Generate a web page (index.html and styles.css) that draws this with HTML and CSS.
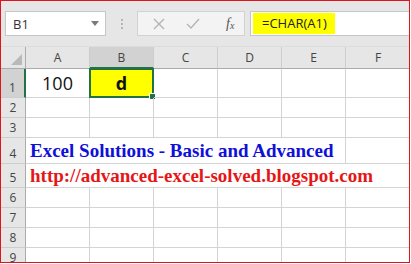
FILE: index.html
```html
<!DOCTYPE html>
<html lang="en">
<head>
    <meta charset="UTF-8">
    <title>Excel CHAR</title>
    <link rel="stylesheet" href="styles.css">
</head>
<body>
    <div class="frame">
        <!-- 1. formula bar -->
        <div class="bar">
            <div class="namebox">
                <span>B1</span>
                <svg class="drop" width="8" height="5" viewBox="0 0 8 5"><path d="M0 0h8L4 5z" fill="#7a7a7a"/></svg>
            </div>
            <div class="grip"><i></i><i></i><i></i></div>
            <div class="btns">
                <svg width="12" height="12" viewBox="0 0 12 12"><path d="M1 1l10 10M11 1L1 11" stroke="#b4b4b4" stroke-width="1.4"/></svg>
                <svg width="14" height="12" viewBox="0 0 14 12"><path d="M1 6l4 4 8-9" stroke="#b4b4b4" stroke-width="1.4" fill="none"/></svg>
                <span class="fx">f<sub>x</sub></span>
            </div>
            <div class="formula">
                <span class="hl">=CHAR(A1)</span>
            </div>
        </div>

        <!-- 2. sheet -->
        <div class="sheet">
            <div class="corner"><svg width="11" height="11" viewBox="0 0 11 11"><path d="M11 0v11H0z" fill="#b9b9b9"/></svg></div>
            <div class="ch">A</div>
            <div class="ch sel">B</div>
            <div class="ch">C</div>
            <div class="ch">D</div>
            <div class="ch">E</div>
            <div class="ch last">F</div>

            <div class="rh sel">1</div>
            <div class="c num">100</div>
            <div class="c active">d<i class="handle"></i></div>
            <div class="c"></div><div class="c"></div><div class="c"></div><div class="c last"></div>

            <div class="rh">2</div>
            <div class="c"></div><div class="c"></div><div class="c"></div><div class="c"></div><div class="c"></div><div class="c last"></div>

            <div class="rh">3</div>
            <div class="c"></div><div class="c"></div><div class="c"></div><div class="c"></div><div class="c"></div><div class="c last"></div>

            <div class="rh">4</div>
            <div class="c span5 blue">Excel Solutions - Basic and Advanced</div>
            <div class="c last"></div>

            <div class="rh">5</div>
            <div class="c span6 red last">http://advanced-excel-solved.blogspot.com</div>

            <div class="rh">6</div>
            <div class="c"></div><div class="c"></div><div class="c"></div><div class="c"></div><div class="c"></div><div class="c last"></div>
            <div class="rh">7</div>
            <div class="c"></div><div class="c"></div><div class="c"></div><div class="c"></div><div class="c"></div><div class="c last"></div>
            <div class="rh">8</div>
            <div class="c"></div><div class="c"></div><div class="c"></div><div class="c"></div><div class="c"></div><div class="c last"></div>
            <div class="rh">9</div>
            <div class="c"></div><div class="c"></div><div class="c"></div><div class="c"></div><div class="c"></div><div class="c last"></div>
        </div>
    </div>
</body>
</html>
```

FILE: styles.css
```css
html,
body {
    margin: 0;
    padding: 0;
    background: #fff;
}

.frame {
    width: 410px;
    height: 263px;
    box-sizing: border-box;
    border: 1px solid #e0141b;
    overflow: hidden;
    font-family: "Open Sans", "Liberation Sans", sans-serif;
}

/* 1. formula bar */
.bar {
    display: flex;
    align-items: center;
    height: 46px;
    padding: 0 0 0 4px;
    box-sizing: border-box;
    background: #e6e6e6;
    border-bottom: 1px solid #dcdcdc;
}

.namebox {
    display: flex;
    align-items: center;
    justify-content: space-between;
    width: 101px;
    height: 25px;
    box-sizing: border-box;
    padding: 0 6px 0 7px;
    background: #fff;
    border: 1px solid #c6c6c6;
    font-size: 13px;
    color: #333;
}

.grip {
    display: flex;
    flex-direction: column;
    gap: 2px;
    margin: 0 14px 0 15px;
}

.grip i {
    width: 2px;
    height: 2px;
    background: #b5b5b5;
}

.btns {
    display: flex;
    align-items: center;
    width: 108px;
    height: 25px;
    box-sizing: border-box;
    padding: 0 0 0 15px;
    background: #f3f3f3;
    border: 1px solid #d2d2d2;
}

.btns svg:first-child {
    margin-right: 21px;
}

.btns svg:nth-child(2) {
    margin-right: 26px;
}

.fx {
    font-family: "Liberation Serif", serif;
    font-style: italic;
    font-size: 14px;
    color: #555;
}

.fx sub {
    font-size: 10px;
    vertical-align: -1px;
}

.formula {
    display: flex;
    align-items: center;
    flex: 1;
    height: 25px;
    margin-left: 5px;
    padding-left: 2px;
    box-sizing: border-box;
    background: #fff;
    border: 1px solid #c6c6c6;
    border-right: 0;
}

.hl {
    background: #ffff00;
    padding: 3px 8px 3px 9px;
    font-size: 13px;
    color: #222;
    line-height: 15px;
}

/* 2. sheet */
.sheet {
    display: grid;
    grid-template-columns: 25px repeat(6, 64px);
    grid-template-rows: 22px 29px 20px 20px 26px 24px 20px 20px 20px 20px;
}

.sheet > div {
    box-sizing: border-box;
    border-right: 1px solid #d4d4d4;
    border-bottom: 1px solid #d4d4d4;
}

.sheet > .last {
    border-right: 0;
}

.corner {
    display: flex;
    align-items: flex-end;
    justify-content: flex-end;
    padding: 0 3px 3px 0;
    background: #e6e6e6;
    border-bottom: 1px solid #ababab !important;
    border-right: 1px solid #ababab !important;
}

.ch {
    display: flex;
    align-items: center;
    justify-content: center;
    background: #e6e6e6;
    border-bottom: 1px solid #ababab !important;
    border-right: 1px solid #cdcdcd !important;
    font-size: 12px;
    color: #444;
}

.ch.last {
    border-right: 0 !important;
}

.ch.sel {
    background: #d2d2d2;
    border-bottom: 2px solid #217346 !important;
}

.rh {
    display: flex;
    align-items: flex-end;
    justify-content: center;
    padding-bottom: 1px;
    background: #e6e6e6;
    border-right: 1px solid #ababab !important;
    border-bottom: 1px solid #cdcdcd !important;
    font-size: 12px;
    color: #444;
}

.rh.sel {
    background: #d2d2d2;
    border-right: 2px solid #217346 !important;
}

.c {
    position: relative;
    display: flex;
    align-items: center;
    font-size: 18px;
}

.num {
    justify-content: center;
    color: #111;
}

.active {
    justify-content: center;
    background: #ffff00;
    border: 2px solid #217346 !important;
    margin: -1px 0 0 -1px;
    font-weight: bold;
    color: #111;
}

.handle {
    position: absolute;
    right: -4px;
    bottom: -4px;
    width: 5px;
    height: 5px;
    background: #217346;
    border: 1px solid #fff;
}

/* text overflowing into neighbour cells */
.span5,
.span6 {
    white-space: nowrap;
    padding-left: 4px;
    font-family: "Liberation Serif", serif;
    font-weight: bold;
    font-size: 19px;
}

.span5 {
    grid-column: 2 / span 5;
}

.span6 {
    grid-column: 2 / span 6;
}

.blue {
    color: #1010d8;
}

.red {
    color: #e51616;
}
```
